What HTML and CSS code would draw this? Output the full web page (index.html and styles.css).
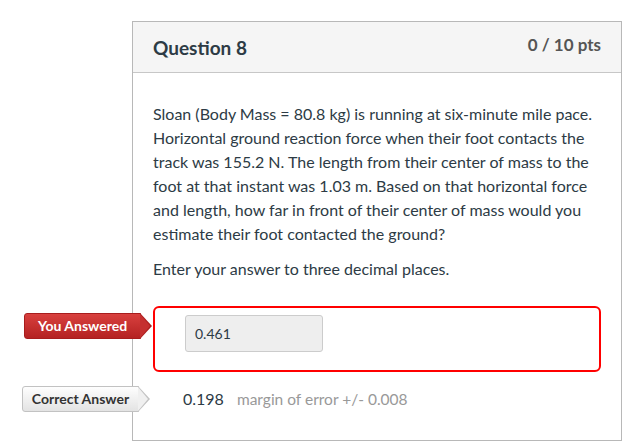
FILE: index.html
```html
<!DOCTYPE html>
<html>
<head>
<meta charset="utf-8">
<link rel="stylesheet" href="styles.css">
</head>
<body>
<div class="page">
  <div class="card">
    <div class="card-header">
      <h2 class="title">Question 8</h2>
      <span class="pts">0 / 10 pts</span>
    </div>
    <div class="card-body">
      <p class="text">Sloan (Body Mass = 80.8 kg) is running at six-minute mile pace. Horizontal ground reaction force when their foot contacts the track was 155.2 N. The length from their center of mass to the foot at that instant was 1.03 m. Based on that horizontal force and length, how far in front of their center of mass would you estimate their foot contacted the ground?</p>
      <p class="text">Enter your answer to three decimal places.</p>
      <div class="answer answer-wrong">
        <span class="arrow arrow-wrong">You Answered</span>
        <div class="input">0.461</div>
      </div>
      <div class="answer answer-correct">
        <span class="arrow arrow-correct">Correct Answer</span>
        <span class="value">0.198</span>
        <span class="margin">margin of error +/- 0.008</span>
      </div>
    </div>
  </div>
</div>
</body>
</html>
```

FILE: styles.css
```css
html, body {
  margin: 0;
  padding: 0;
  background: #fff;
}
body {
  font-family: Lato, "Open Sans", sans-serif;
  color: #2d3b45;
}
.page {
  padding: 21px 0 0 132px;
}
.card {
  width: 488px;
  border: 1px solid #b8b8b8;
}
.card-header {
  display: flex;
  justify-content: space-between;
  align-items: flex-start;
  height: 50px;
  background: #f5f5f5;
  border-bottom: 1px solid #c7c7c7;
  padding: 0 20px;
}
.title {
  margin: 14px 0 0;
  font-size: 19px;
  font-weight: 700;
  line-height: 24px;
  color: #2d3b45;
}
.pts {
  margin-top: 11px;
  font-size: 17px;
  font-weight: 700;
  line-height: 24px;
  color: #555;
}
.card-body {
  padding: 29px 20px 28px;
}
.text {
  margin: 0 0 11px;
  font-size: 16px;
  line-height: 24px;
}
.answer {
  position: relative;
}
.answer-wrong {
  margin-top: 25px;
  border: 2px solid #f00;
  border-radius: 6px;
  padding: 7px 30px 18px;
  height: 37px;
}
.input {
  box-sizing: border-box;
  width: 138px;
  height: 37px;
  background: #eee;
  border: 1px solid #ccc;
  border-radius: 3px;
  padding-left: 9px;
  font-size: 14px;
  line-height: 35px;
  color: #2d3b45;
}
.answer-correct {
  margin-top: 14px;
  padding-left: 30px;
  display: flex;
  align-items: baseline;
  height: 26px;
  line-height: 26px;
}
.value {
  font-size: 16px;
  color: #2d3b45;
}
.margin {
  margin-left: 13px;
  font-size: 15.5px;
  color: #999;
}
.arrow {
  position: absolute;
  box-sizing: border-box;
  height: 26px;
  width: 117px;
  font-size: 14px;
  font-weight: 700;
  line-height: 24px;
  text-align: center;
  border-radius: 3px 0 0 3px;
}
.arrow::before,
.arrow::after {
  content: "";
  position: absolute;
  width: 0;
  height: 0;
}
.arrow::before {
  top: -1px;
  right: -12px;
  border-top: 13px solid transparent;
  border-bottom: 13px solid transparent;
  border-left: 12px solid transparent;
}
.arrow::after {
  top: 0;
  right: -10px;
  border-top: 12px solid transparent;
  border-bottom: 12px solid transparent;
  border-left: 10px solid transparent;
}
.arrow-wrong {
  left: -131px;
  top: 5px;
  color: #fff;
  background: linear-gradient(#d8403e, #b42222);
  border: 1px solid #a81d1d;
}
.arrow-wrong::before {
  border-left-color: #ad1f1f;
}
.arrow-wrong::after {
  border-left-color: #c53030;
}
.arrow-correct {
  left: -131px;
  top: 0;
  color: #333;
  background: linear-gradient(#fefefe, #e3e3e3);
  border: 1px solid #c2c2c2;
}
.arrow-correct::before {
  border-left-color: #c2c2c2;
}
.arrow-correct::after {
  border-left-color: #f0f0f0;
}
```
